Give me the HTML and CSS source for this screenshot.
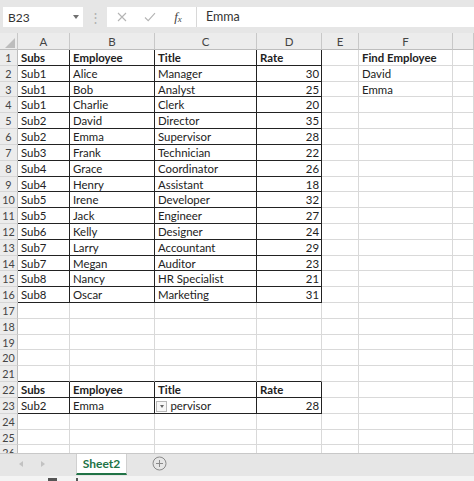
FILE: index.html
```html
<!DOCTYPE html>
<html>
<head>
<meta charset="utf-8">
<link rel="stylesheet" href="styles.css">
</head>
<body>
<div class="fbar">
  <div class="namebox"><span>B23</span><span class="caret"></span></div>
  <div class="dots">⋮</div>
  <div class="formula">
    <span class="fbtn w1"><svg width="10" height="10" viewBox="0 0 10 10"><path d="M1 1L9 9M9 1L1 9" stroke="#b4b4b4" stroke-width="1.1" fill="none"/></svg></span>
    <span class="fbtn w2"><svg width="12" height="10" viewBox="0 0 12 10"><path d="M1 5.5L4.2 8.6L11 1.2" stroke="#b4b4b4" stroke-width="1.1" fill="none"/></svg></span>
    <span class="fbtn w3"><span class="fxf">f</span><span class="fxx">x</span></span>
    <span class="finput">Emma</span>
  </div>
</div>
<div class="sheet">
  <div class="corner"><svg width="18" height="17" viewBox="0 0 18 17"><polygon points="5,15 15,15 15,5" fill="#bdbdbd"/></svg></div><div class="ch">A</div><div class="ch">B</div><div class="ch">C</div><div class="ch">D</div><div class="ch">E</div><div class="ch">F</div><div class="ch"></div>
  <div class="r">1</div><div class="k b">Subs</div><div class="k b">Employee</div><div class="k b">Title</div><div class="k b">Rate</div><div class="g"></div><div class="g b">Find Employee</div><div class="g"></div>
  <div class="r">2</div><div class="k">Sub1</div><div class="k">Alice</div><div class="k">Manager</div><div class="k n">30</div><div class="g"></div><div class="g">David</div><div class="g"></div>
  <div class="r">3</div><div class="k">Sub1</div><div class="k">Bob</div><div class="k">Analyst</div><div class="k n">25</div><div class="g"></div><div class="g">Emma</div><div class="g"></div>
  <div class="r">4</div><div class="k">Sub1</div><div class="k">Charlie</div><div class="k">Clerk</div><div class="k n">20</div><div class="g"></div><div class="g"></div><div class="g"></div>
  <div class="r">5</div><div class="k">Sub2</div><div class="k">David</div><div class="k">Director</div><div class="k n">35</div><div class="g"></div><div class="g"></div><div class="g"></div>
  <div class="r">6</div><div class="k">Sub2</div><div class="k">Emma</div><div class="k">Supervisor</div><div class="k n">28</div><div class="g"></div><div class="g"></div><div class="g"></div>
  <div class="r">7</div><div class="k">Sub3</div><div class="k">Frank</div><div class="k">Technician</div><div class="k n">22</div><div class="g"></div><div class="g"></div><div class="g"></div>
  <div class="r">8</div><div class="k">Sub4</div><div class="k">Grace</div><div class="k">Coordinator</div><div class="k n">26</div><div class="g"></div><div class="g"></div><div class="g"></div>
  <div class="r">9</div><div class="k">Sub4</div><div class="k">Henry</div><div class="k">Assistant</div><div class="k n">18</div><div class="g"></div><div class="g"></div><div class="g"></div>
  <div class="r">10</div><div class="k">Sub5</div><div class="k">Irene</div><div class="k">Developer</div><div class="k n">32</div><div class="g"></div><div class="g"></div><div class="g"></div>
  <div class="r">11</div><div class="k">Sub5</div><div class="k">Jack</div><div class="k">Engineer</div><div class="k n">27</div><div class="g"></div><div class="g"></div><div class="g"></div>
  <div class="r">12</div><div class="k">Sub6</div><div class="k">Kelly</div><div class="k">Designer</div><div class="k n">24</div><div class="g"></div><div class="g"></div><div class="g"></div>
  <div class="r">13</div><div class="k">Sub7</div><div class="k">Larry</div><div class="k">Accountant</div><div class="k n">29</div><div class="g"></div><div class="g"></div><div class="g"></div>
  <div class="r">14</div><div class="k">Sub7</div><div class="k">Megan</div><div class="k">Auditor</div><div class="k n">23</div><div class="g"></div><div class="g"></div><div class="g"></div>
  <div class="r">15</div><div class="k">Sub8</div><div class="k">Nancy</div><div class="k">HR Specialist</div><div class="k n">21</div><div class="g"></div><div class="g"></div><div class="g"></div>
  <div class="r">16</div><div class="k">Sub8</div><div class="k">Oscar</div><div class="k">Marketing</div><div class="k n">31</div><div class="g"></div><div class="g"></div><div class="g"></div>
  <div class="r">17</div><div class="g"></div><div class="g"></div><div class="g"></div><div class="g"></div><div class="g"></div><div class="g"></div><div class="g"></div>
  <div class="r">18</div><div class="g"></div><div class="g"></div><div class="g"></div><div class="g"></div><div class="g"></div><div class="g"></div><div class="g"></div>
  <div class="r">19</div><div class="g"></div><div class="g"></div><div class="g"></div><div class="g"></div><div class="g"></div><div class="g"></div><div class="g"></div>
  <div class="r">20</div><div class="g"></div><div class="g"></div><div class="g"></div><div class="g"></div><div class="g"></div><div class="g"></div><div class="g"></div>
  <div class="r">21</div><div class="g u"></div><div class="g u"></div><div class="g u"></div><div class="g u"></div><div class="g"></div><div class="g"></div><div class="g"></div>
  <div class="r">22</div><div class="k b">Subs</div><div class="k b">Employee</div><div class="k b">Title</div><div class="k b">Rate</div><div class="g"></div><div class="g"></div><div class="g"></div>
  <div class="r">23</div><div class="k">Sub2</div><div class="k">Emma</div><div class="k dd">Supervisor<span class="ddbtn"></span></div><div class="k n">28</div><div class="g"></div><div class="g"></div><div class="g"></div>
  <div class="r">24</div><div class="g"></div><div class="g"></div><div class="g"></div><div class="g"></div><div class="g"></div><div class="g"></div><div class="g"></div>
  <div class="r">25</div><div class="g"></div><div class="g"></div><div class="g"></div><div class="g"></div><div class="g"></div><div class="g"></div><div class="g"></div>
  <div class="r">26</div><div class="g"></div><div class="g"></div><div class="g"></div><div class="g"></div><div class="g"></div><div class="g"></div><div class="g"></div>
</div>
<div class="tabs">
  <span class="nav left"></span>
  <span class="nav right"></span>
  <span class="tab">Sheet2</span>
  <span class="plus"><svg width="15" height="15" viewBox="0 0 15 15"><circle cx="7.5" cy="7.5" r="6.5" stroke="#8a8a8a" stroke-width="1" fill="none"/><path d="M7.5 4V11M4 7.5H11" stroke="#8a8a8a" stroke-width="1"/></svg></span>
</div>
<div class="status"><span class="m1"></span><span class="m2"></span></div>
</body>
</html>
```
FILE: styles.css
```css
body {
  margin: 0;
  width: 474px;
  height: 481px;
  overflow: hidden;
  background: #fff;
  font-family: Lato, "Liberation Sans", sans-serif;
  color: #222;
}
.fbar {
  height: 33px;
  box-sizing: border-box;
  padding-top: 7px;
  background: #e6e6e6;
  display: flex;
  align-items: flex-start;
}
.namebox {
  margin-left: 3px;
  width: 80px;
  height: 20px;
  box-sizing: border-box;
  background: #fff;
  display: flex;
  align-items: center;
  justify-content: space-between;
  padding: 0 4px 0 5px;
  font-size: 12px;
  color: #333;
}
.caret {
  width: 0;
  height: 0;
  border-left: 3.5px solid transparent;
  border-right: 3.5px solid transparent;
  border-top: 4px solid #707070;
}
.dots {
  width: 24px;
  height: 20px;
  line-height: 20px;
  text-align: center;
  color: #b0b0b0;
  font-size: 13px;
}
.formula {
  flex: 1;
  height: 20px;
  background: #fff;
  display: flex;
  align-items: center;
}
.fbtn {
  display: flex;
  align-items: center;
  justify-content: center;
  height: 20px;
}
.w1 { width: 30px; }
.w2 { width: 26px; }
.w3 { width: 30px; }
.fxf {
  font-family: "Liberation Serif", serif;
  font-style: italic;
  font-size: 13px;
  color: #444;
}
.fxx {
  font-family: "Liberation Serif", serif;
  font-style: italic;
  font-size: 9px;
  color: #444;
  margin-top: 4px;
}
.finput {
  flex: 1;
  height: 20px;
  margin-left: 3px;
  border-left: 1px solid #d8d8d8;
  padding-left: 9px;
  line-height: 20px;
  font-size: 12.5px;
  color: #333;
}
.sheet {
  height: 420px;
  overflow: hidden;
  display: grid;
  grid-template-columns: 18px 52px 85px 102px 65px 37px 94px 21px;
  grid-template-rows: 17px;
  grid-auto-rows: 15.82px;
  font-size: 11.4px;
}
.sheet > div {
  box-sizing: border-box;
  white-space: nowrap;
  overflow: hidden;
}
.corner {
  background: #ececec;
  border-right: 1px solid #c8c8c8;
  border-bottom: 1px solid #bdbdbd;
}
.corner svg { display: block; }
.ch {
  background: #ececec;
  border-right: 1px solid #c8c8c8;
  border-bottom: 1px solid #bdbdbd;
  text-align: center;
  line-height: 17px;
  font-size: 11.5px;
  color: #444;
}
.r {
  background: #ececec;
  border-right: 1px solid #bdbdbd;
  border-bottom: 1px solid #d6d6d6;
  text-align: center;
  font-size: 10.8px;
  color: #444;
  padding-top: 1px;
  line-height: 14.8px;
}
.g, .k {
  border-right: 1px solid #d9d9d9;
  border-bottom: 1px solid #d9d9d9;
  padding: 1px 2px 0 3px;
  line-height: 14.8px;
}
.k {
  border-right-color: #222;
  border-bottom-color: #222;
}
.u { border-bottom-color: #222; }
.n { text-align: right; }
.b { font-weight: bold; }
.dd { position: relative; }
.ddbtn {
  position: absolute;
  left: 1px;
  top: 3px;
  width: 11px;
  height: 11px;
  box-sizing: border-box;
  background: #f7f7f7;
  border: 1px solid #b8b8b8;
  box-shadow: 3px 0 0 #fff;
}
.ddbtn::after {
  content: "";
  position: absolute;
  left: 2.5px;
  top: 3.5px;
  border-left: 2.5px solid transparent;
  border-right: 2.5px solid transparent;
  border-top: 3px solid #666;
}
.tabs {
  height: 23px;
  box-sizing: border-box;
  background: #e6e6e6;
  border-top: 1px solid #c8c8c8;
  display: flex;
  align-items: flex-start;
}
.nav {
  width: 0;
  height: 0;
  margin-top: 7px;
  border-top: 3.5px solid transparent;
  border-bottom: 3.5px solid transparent;
}
.nav.left {
  margin-left: 19px;
  border-right: 4px solid #c2c2c2;
}
.nav.right {
  margin-left: 18px;
  border-left: 4px solid #c2c2c2;
}
.tab {
  margin-left: 31px;
  width: 51px;
  height: 21px;
  box-sizing: border-box;
  background: #fff;
  border-left: 1px solid #d0d0d0;
  border-right: 1px solid #d0d0d0;
  border-bottom: 2px solid #217346;
  text-align: center;
  line-height: 19px;
  font-size: 12px;
  font-weight: bold;
  color: #217346;
}
.plus {
  margin-left: 25px;
  margin-top: 2px;
  display: flex;
}
.status {
  height: 5px;
  background: #f4f4f4;
  position: relative;
}
.m1 {
  position: absolute;
  left: 48px;
  top: 2px;
  width: 9px;
  height: 3px;
  background: #555;
}
.m2 {
  position: absolute;
  left: 76px;
  top: 2px;
  width: 2px;
  height: 3px;
  background: #555;
}
```
